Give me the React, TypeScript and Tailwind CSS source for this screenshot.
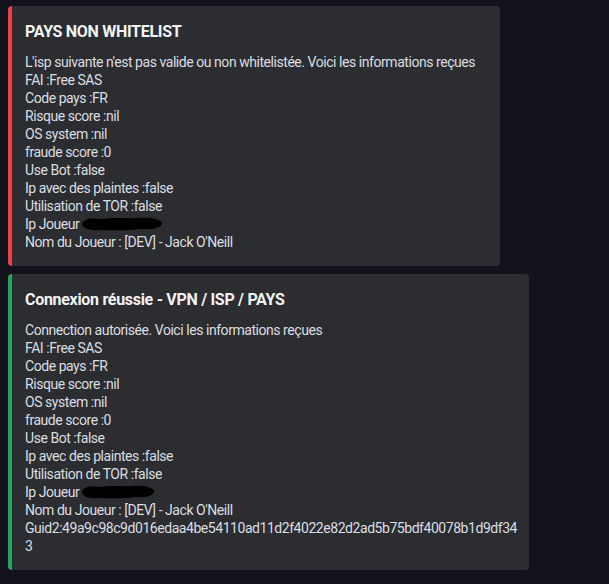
import React from "react";

interface EmbedType {
  title: string;
  color: string;
  width: string;
  lines: string[];
  guid?: string[];
}

const details = [
  "FAI :Free SAS",
  "Code pays :FR",
  "Risque score :nil",
  "OS system :nil",
  "fraude score :0",
  "Use Bot :false",
  "Ip avec des plaintes :false",
  "Utilisation de TOR :false",
];

const embeds: EmbedType[] = [
  {
    title: "PAYS NON WHITELIST",
    color: "border-[#f23f43]",
    width: "w-[492px]",
    lines: [
      "L'isp suivante n'est pas valide ou non whitelistée. Voici les informations reçues",
      ...details,
    ],
  },
  {
    title: "Connexion réussie - VPN / ISP / PAYS",
    color: "border-[#23a55a]",
    width: "w-[521px]",
    lines: ["Connection autorisée. Voici les informations reçues", ...details],
    // wraps like the real embed does
    guid: ["Guid2:49a9c98c9d016edaa4be54110ad11d2f4022e82d2ad5b75bdf40078b1d9df34", "3"],
  },
];

function Redacted({ w }: { w: number }) {
  return (
    <svg
      width={w}
      height="16"
      viewBox="0 0 84 16"
      preserveAspectRatio="none"
      className="inline-block align-middle -mt-[3px] ml-[2px]"
    >
      <path
        d="M1 8 C3 2 12 2 22 3 C34 1 46 3 58 2 C68 1 78 2 83 6 C84 11 76 14 62 13 C48 15 34 14 20 14 C10 15 2 13 1 8 Z"
        fill="#000"
      />
    </svg>
  );
}

function Embed({ embed, blob }: { embed: EmbedType; blob: number }) {
  return (
    <div
      className={`${embed.width} ${embed.color} border-l-4 rounded bg-[#2b2d31] pl-[13px] pr-4 pt-[15px] pb-[15px]`}
    >
      <h2 className="text-[16px] font-bold text-[#f2f3f5] leading-[22px] tracking-[-0.3px]">
        {embed.title}
      </h2>
      <div className="mt-[10px] text-[14px] leading-[18px] text-[#dbdee1] tracking-[-0.45px] whitespace-nowrap">
        {embed.lines.map((line, index) => (
          <div key={index}>{line}</div>
        ))}
        <div>
          Ip Joueur
          <Redacted w={blob} />
        </div>
        <div>Nom du Joueur : [DEV] - Jack O'Neill</div>
        {embed.guid && embed.guid.map((g, i) => <div key={i}>{g}</div>)}
      </div>
    </div>
  );
}

export default function App() {
  return (
    <div
      className="w-[609px] h-[584px] bg-[#12121c] pt-[6px] pl-2 flex flex-col gap-2 overflow-hidden"
      style={{ fontFamily: "Roboto, 'Noto Sans', sans-serif" }}
    >
      <Embed embed={embeds[0]} blob={82} />
      <Embed embed={embeds[1]} blob={74} />
    </div>
  );
}
